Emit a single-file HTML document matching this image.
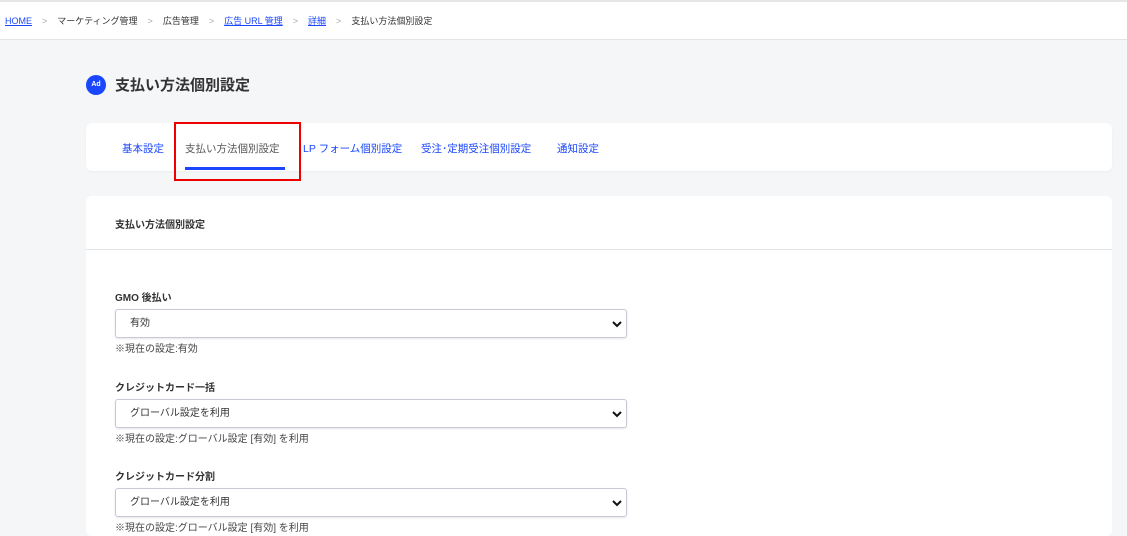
<!DOCTYPE html>
<html><head><meta charset="utf-8"><style>
*{box-sizing:border-box;margin:0;padding:0}
body{width:1127px;height:534px;overflow:hidden;background:#f5f6f8;font-family:"Liberation Sans","Noto Sans CJK JP",sans-serif;color:#333;position:relative}
.top{position:absolute;left:0;top:0;width:1127px;height:40px;background:#fff;border-top:2px solid #e6e6e6;border-bottom:1px solid #e2e4e8}
.bc{position:absolute;top:12px;left:5px;font-size:9px;color:#333;white-space:nowrap}
.bc a{color:#1a46ff;text-decoration:underline}
.bc .s{color:#aaa;margin:0 10px}
.title{position:absolute;left:86px;top:74px;display:flex;align-items:center;font-size:15px;font-weight:bold;color:#333}
.ic{width:20px;height:20px;border-radius:50%;background:#1a46ff;color:#fff;font-size:7px;font-weight:bold;display:flex;align-items:center;justify-content:center;margin-right:9px}
.tabs{position:absolute;left:86px;top:123px;width:1026px;height:48px;background:#fff;border-radius:6px;box-shadow:0 1px 2px rgba(0,0,0,.04)}
.tab{position:absolute;top:18px;font-size:10.5px;color:#1a46ff;white-space:nowrap}
.red{position:absolute;left:174px;top:122px;width:127px;height:59px;border:2px solid #e00}
.ul{position:absolute;left:185px;top:167px;width:100px;height:3px;background:#1a46ff}
.card{position:absolute;left:86px;top:196px;width:1026px;height:340px;background:#fff;border-radius:6px}
.ch{height:54px;border-bottom:1px solid #e2e4e8;padding:20px 0 0 29px;font-size:10px;font-weight:bold}
.f{position:absolute;left:29px}
.lab{font-size:10px;font-weight:bold}
.sel{width:512px;height:29px;border:1px solid #c8c9d6;border-radius:3px;box-shadow:0 1px 2px rgba(0,0,0,.1);margin-top:5px;font-size:10px;line-height:27px;padding-left:14px;position:relative}
.sel svg{position:absolute;right:4px;top:11px}
.note{font-size:10px;color:#444;margin-top:2px}
</style></head><body>
<div class="top"><div class="bc"><a>HOME</a><span class="s">&gt;</span>マーケティング管理<span class="s">&gt;</span>広告管理<span class="s">&gt;</span><a>広告 URL 管理</a><span class="s">&gt;</span><a>詳細</a><span class="s">&gt;</span>支払い方法個別設定</div></div>
<div class="title"><div class="ic">Ad</div>支払い方法個別設定</div>
<div class="tabs">
<span class="tab" style="left:36px">基本設定</span>
<span class="tab" style="left:99px;color:#555">支払い方法個別設定</span>
<span class="tab" style="left:217px">LP フォーム個別設定</span>
<span class="tab" style="left:335px">受注･定期受注個別設定</span>
<span class="tab" style="left:471px">通知設定</span>
</div>
<div class="ul"></div><div class="red"></div>
<div class="card"><div class="ch">支払い方法個別設定</div>
<div class="f" style="top:93px"><div class="lab">GMO 後払い</div><div class="sel">有効<svg width="10" height="7" viewBox="0 0 10 7"><path d="M1 1l4 4 4-4" stroke="#111" stroke-width="2" fill="none"/></svg></div><div class="note">※現在の設定:有効</div></div>
<div class="f" style="top:183px"><div class="lab">クレジットカード一括</div><div class="sel">グローバル設定を利用<svg width="10" height="7" viewBox="0 0 10 7"><path d="M1 1l4 4 4-4" stroke="#111" stroke-width="2" fill="none"/></svg></div><div class="note">※現在の設定:グローバル設定 [有効] を利用</div></div>
<div class="f" style="top:272px"><div class="lab">クレジットカード分割</div><div class="sel">グローバル設定を利用<svg width="10" height="7" viewBox="0 0 10 7"><path d="M1 1l4 4 4-4" stroke="#111" stroke-width="2" fill="none"/></svg></div><div class="note">※現在の設定:グローバル設定 [有効] を利用</div></div>
</div>
</body></html>
